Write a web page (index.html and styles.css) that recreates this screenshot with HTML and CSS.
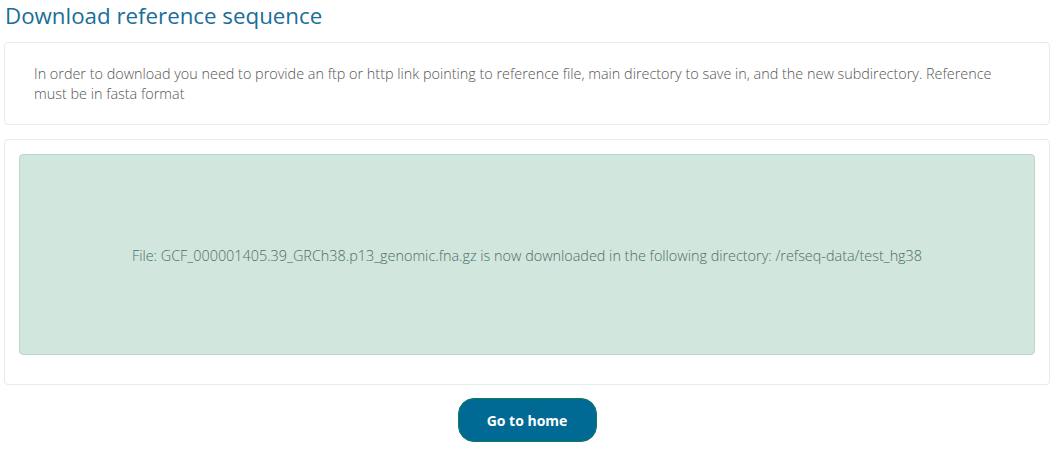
FILE: index.html
```
<!DOCTYPE html>
<html>
<head>
<meta charset="utf-8">
<link rel="stylesheet" href="styles.css">
</head>
<body>
<div class="page">
  <h2 class="title">Download reference sequence</h2>
  <div class="card info">
    <p>In order to download you need to provide an ftp or http link pointing to reference file, main directory to save in, and the new subdirectory. Reference must be in fasta format</p>
  </div>
  <div class="card result">
    <div class="alert">File: GCF_000001405.39_GRCh38.p13_genomic.fna.gz is now downloaded in the following directory: /refseq-data/test_hg38</div>
  </div>
  <div class="actions">
    <button class="btn">Go to home</button>
  </div>
</div>
</body>
</html>
```
FILE: styles.css
```
html, body {
  margin: 0;
  padding: 0;
  background: #ffffff;
  font-family: "Open Sans", "Liberation Sans", sans-serif;
}
.page {
  width: 1046px;
  margin-left: 4px;
  display: flex;
  flex-direction: column;
}
.title {
  margin: 0;
  padding: 1px 0 0 1px;
  font-size: 22.3px;
  line-height: 30px;
  font-weight: 400;
  color: #1a6e9a;
  height: 42px;
  box-sizing: border-box;
}
.card {
  border: 1px solid #e1edef;
  border-radius: 4px;
  background: #fff;
  box-sizing: border-box;
}
.info {
  height: 83px;
  padding: 21px 29px 0 29px;
}
.info p {
  margin: 0;
  font-size: 14.4px;
  line-height: 20px;
  font-weight: 300;
  color: #555555;
}
.result {
  margin-top: 14px;
  padding: 14px 14px 29px 14px;
}
.alert {
  height: 201px;
  box-sizing: border-box;
  background: #d1e6dd;
  border: 1px solid #b7d9ca;
  border-radius: 4px;
  display: flex;
  align-items: center;
  justify-content: center;
  font-size: 14.4px;
  font-weight: 300;
  color: #4d6e66;
  padding-top: 2px;
}
.actions {
  display: flex;
  justify-content: center;
  margin-top: 13px;
}
.btn {
  width: 139px;
  height: 44px;
  border-radius: 16px;
  background: #016a94;
  border: 1px solid #11795e;
  color: #ffffff;
  font-family: "Open Sans", "Liberation Sans", sans-serif;
  font-weight: 700;
  font-size: 14px;
  padding: 0;
  cursor: pointer;
}
```
